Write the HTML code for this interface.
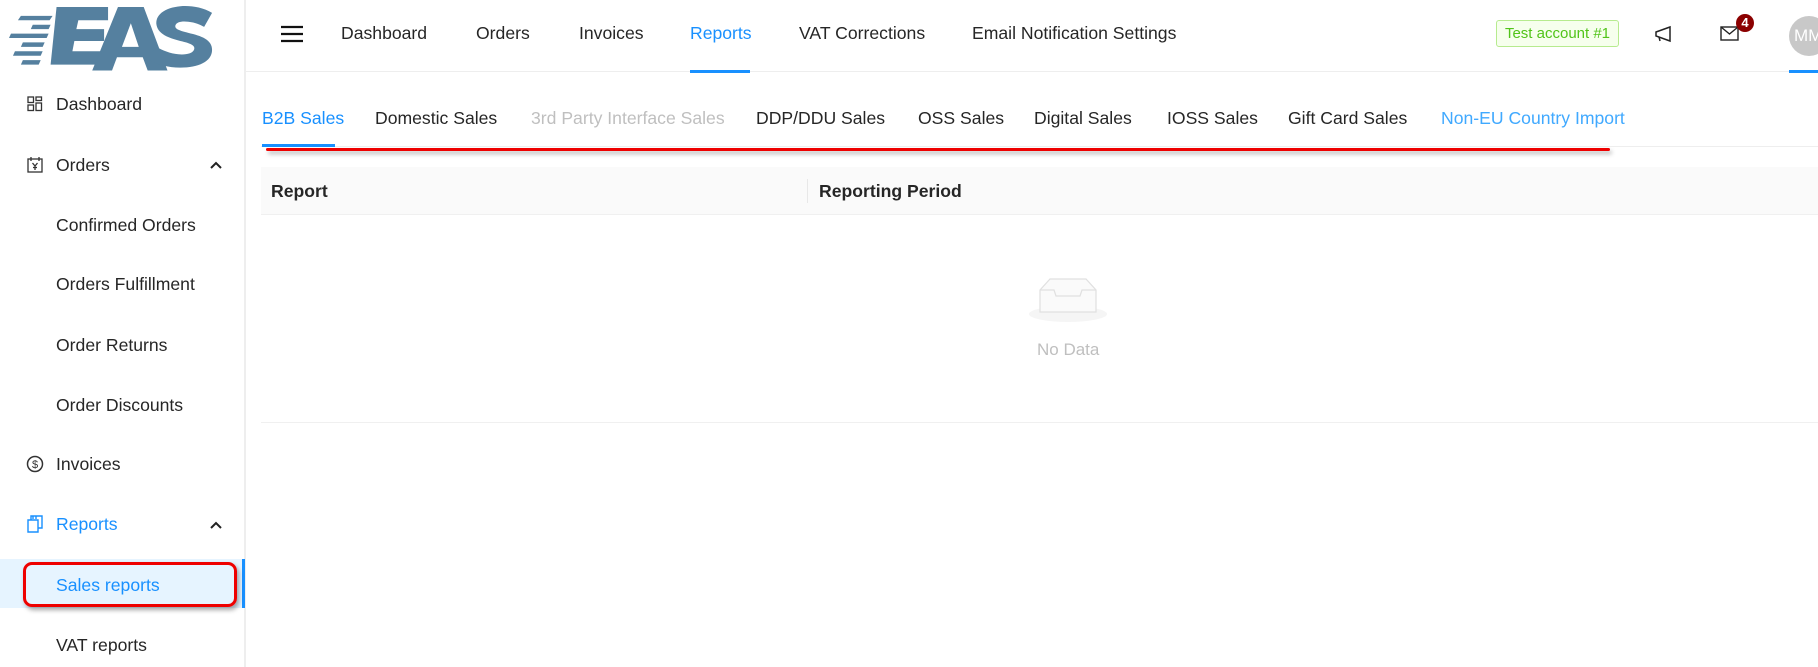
<!DOCTYPE html>
<html><head><meta charset="utf-8"><style>
*{margin:0;padding:0;box-sizing:border-box}
body{width:1818px;height:667px;overflow:hidden;background:#fff;font-family:"Liberation Sans",sans-serif;color:#262626;position:relative}
.a{position:absolute;white-space:nowrap}
.nav{font-size:17.6px;top:23px}
.side{font-size:17.6px}
.tab{font-size:17.6px;top:108px}
</style></head><body>
<!-- sidebar -->
<div class="a" style="left:244px;top:0;width:2px;height:667px;background:#eeeeee"></div>
<svg class="a" style="left:9px;top:4px" width="210" height="68" viewBox="0 0 212 92" preserveAspectRatio="none">
<g fill="#55809f">
<path d="M48 4h52v18H70l-2 12h28v16H66l-2 14h30v18H42z"/>
<path d="M110 4h26l24 86h-20l-5-18h-26l-5 18H84zM123 26l-9 32h17z"/>
<path d="M205 12c-10-8-22-10-32-9-16 2-26 12-24 26 2 12 12 17 24 21 10 3 15 6 14 11-1 6-9 8-16 7-8-1-16-5-22-10l-10 16c10 8 22 12 34 12 18 0 32-8 32-24 0-14-11-19-24-23-9-3-14-5-13-10 1-5 7-6 13-5 7 1 12 4 16 7z"/>
<path d="M12 16h32l-3 6H9zM24 28h18l-2 6H22zM2 40h38l-2 6H0zM14 52h22l-2 6H12zM6 64h28l-2 6H4zM14 76h18l-2 6H12z"/>
</g></svg>

<svg class="a" style="left:27px;top:96px" width="16" height="16" viewBox="0 0 16 16" fill="none" stroke="#333" stroke-width="1.3"><rect x="1" y="1" width="5.5" height="5.5"/><rect x="9" y="1" width="5.5" height="3.5"/><rect x="1" y="9" width="5.5" height="5.5"/><rect x="9" y="7" width="5.5" height="7.5"/></svg>
<div class="a side" style="left:56px;top:94px">Dashboard</div>

<svg class="a" style="left:27px;top:156px" width="16" height="17" viewBox="0 0 16 17" fill="none" stroke="#333" stroke-width="1.3"><rect x="1" y="3" width="14" height="13"/><path d="M4 1v4M12 1v4M5.5 7l2.5 3 2.5-3M8 10v4M6 11.5h4"/></svg>
<div class="a side" style="left:56px;top:155px">Orders</div>
<svg class="a" style="left:210px;top:161px" width="12" height="8" viewBox="0 0 12 8"><path d="M1 7l5-5 5 5" fill="none" stroke="#222" stroke-width="2"/></svg>

<div class="a side" style="left:56px;top:215px">Confirmed Orders</div>
<div class="a side" style="left:56px;top:274px">Orders Fulfillment</div>
<div class="a side" style="left:56px;top:335px">Order Returns</div>
<div class="a side" style="left:56px;top:395px">Order Discounts</div>

<svg class="a" style="left:26px;top:455px" width="18" height="18" viewBox="0 0 18 18"><circle cx="9" cy="9" r="7.5" fill="none" stroke="#333" stroke-width="1.5"/><text x="9" y="13" font-size="11" text-anchor="middle" font-family="Liberation Sans" fill="#333">$</text></svg>
<div class="a side" style="left:56px;top:454px">Invoices</div>

<svg class="a" style="left:27px;top:515px" width="16" height="18" viewBox="0 0 16 18" fill="none" stroke="#1890ff" stroke-width="1.4"><path d="M1 5h10v12H1z"/><path d="M4 5V1h11v12h-4"/><path d="M6 1v3M9 1v3"/></svg>
<div class="a side" style="left:56px;top:514px;color:#1890ff">Reports</div>
<svg class="a" style="left:210px;top:521px" width="12" height="8" viewBox="0 0 12 8"><path d="M1 7l5-5 5 5" fill="none" stroke="#222" stroke-width="2"/></svg>

<div class="a" style="left:0;top:559px;width:245px;height:49px;background:#e6f4ff"></div>
<div class="a" style="left:242px;top:559px;width:3px;height:49px;background:#1890ff"></div>
<div class="a" style="left:23px;top:562px;width:214px;height:45px;border:3px solid #e00;border-radius:9px;box-shadow:2px 3px 5px rgba(0,0,0,.35)"></div>
<div class="a side" style="left:56px;top:575px;color:#1890ff">Sales reports</div>
<div class="a side" style="left:56px;top:635px">VAT reports</div>

<!-- header -->
<div class="a" style="left:245px;top:71px;width:1573px;height:1px;background:#eee"></div>
<svg class="a" style="left:281px;top:25px" width="22" height="18" viewBox="0 0 22 18"><path d="M0 2h22M0 9h22M0 16h22" stroke="#111" stroke-width="2.2"/></svg>
<div class="a nav" style="left:341px">Dashboard</div>
<div class="a nav" style="left:476px">Orders</div>
<div class="a nav" style="left:579px">Invoices</div>
<div class="a nav" style="left:690px;color:#1890ff">Reports</div>
<div class="a" style="left:690px;top:70px;width:60px;height:3px;background:#1890ff"></div>
<div class="a nav" style="left:799px">VAT Corrections</div>
<div class="a nav" style="left:972px">Email Notification Settings</div>

<div class="a" style="left:1496px;top:20px;width:123px;height:27px;background:#f6ffed;border:1px solid #b7eb8f;border-radius:3px;color:#52c41a;font-size:15px;line-height:25px;text-align:center">Test account #1</div>
<svg class="a" style="left:1654px;top:25px" width="18" height="18" viewBox="0 0 18 18" fill="none" stroke="#222" stroke-width="1.5"><path d="M2 7l14-5v14L2 11z"/><path d="M5 12l1 4"/></svg>
<svg class="a" style="left:1720px;top:26px" width="19" height="15" viewBox="0 0 19 15" fill="none" stroke="#222" stroke-width="1.4"><rect x="1" y="1" width="17" height="13"/><path d="M1 1l8.5 7L18 1"/></svg>
<div class="a" style="left:1736px;top:14px;width:18px;height:18px;border-radius:50%;background:#8b0000;color:#fff;font-size:13px;font-weight:bold;text-align:center;line-height:18px">4</div>
<div class="a" style="left:1789px;top:16px;width:40px;height:40px;border-radius:50%;background:#c8c8c8;color:#fff;font-size:17px;line-height:40px;padding-left:5px">MM</div>
<div class="a" style="left:1789px;top:70px;width:29px;height:3px;background:#1890ff"></div>

<!-- tabs -->
<div class="a tab" style="left:262px;color:#1890ff">B2B Sales</div>
<div class="a tab" style="left:375px">Domestic Sales</div>
<div class="a tab" style="left:531px;color:#bfbfbf">3rd Party Interface Sales</div>
<div class="a tab" style="left:756px">DDP/DDU Sales</div>
<div class="a tab" style="left:918px">OSS Sales</div>
<div class="a tab" style="left:1034px">Digital Sales</div>
<div class="a tab" style="left:1167px">IOSS Sales</div>
<div class="a tab" style="left:1288px">Gift Card Sales</div>
<div class="a tab" style="left:1441px;color:#40a9ff">Non-EU Country Import</div>
<div class="a" style="left:261px;top:146px;width:1557px;height:1px;background:#eee"></div>
<div class="a" style="left:262px;top:144px;width:73px;height:3px;background:#1890ff"></div>
<div class="a" style="left:266px;top:148px;width:1344px;height:3px;background:#e00;border-radius:2px;box-shadow:2px 3px 4px rgba(0,0,0,.3)"></div>

<!-- table -->
<div class="a" style="left:261px;top:167px;width:1557px;height:48px;background:#fafafa;border-bottom:1px solid #f0f0f0"></div>
<div class="a" style="left:271px;top:181px;font-size:17.6px;font-weight:bold">Report</div>
<div class="a" style="left:807px;top:179px;width:1px;height:24px;background:#e8e8e8"></div>
<div class="a" style="left:819px;top:181px;font-size:17.6px;font-weight:bold">Reporting Period</div>
<svg class="a" style="left:1028px;top:274px" width="80" height="50" viewBox="0 0 80 50"><ellipse cx="40" cy="40" rx="39" ry="8" fill="#f5f5f5"/><path d="M12 16L22 5h36l10 11v22H12z" fill="#fafafa" stroke="#e0e0e0" stroke-width="1.2"/><path d="M12 16h14l2 6h24l2-6h14" fill="none" stroke="#e0e0e0" stroke-width="1.2"/></svg>
<div class="a" style="left:1037px;top:340px;font-size:17px;color:#bfbfbf">No Data</div>
<div class="a" style="left:261px;top:422px;width:1557px;height:1px;background:#f0f0f0"></div>
</body></html>
